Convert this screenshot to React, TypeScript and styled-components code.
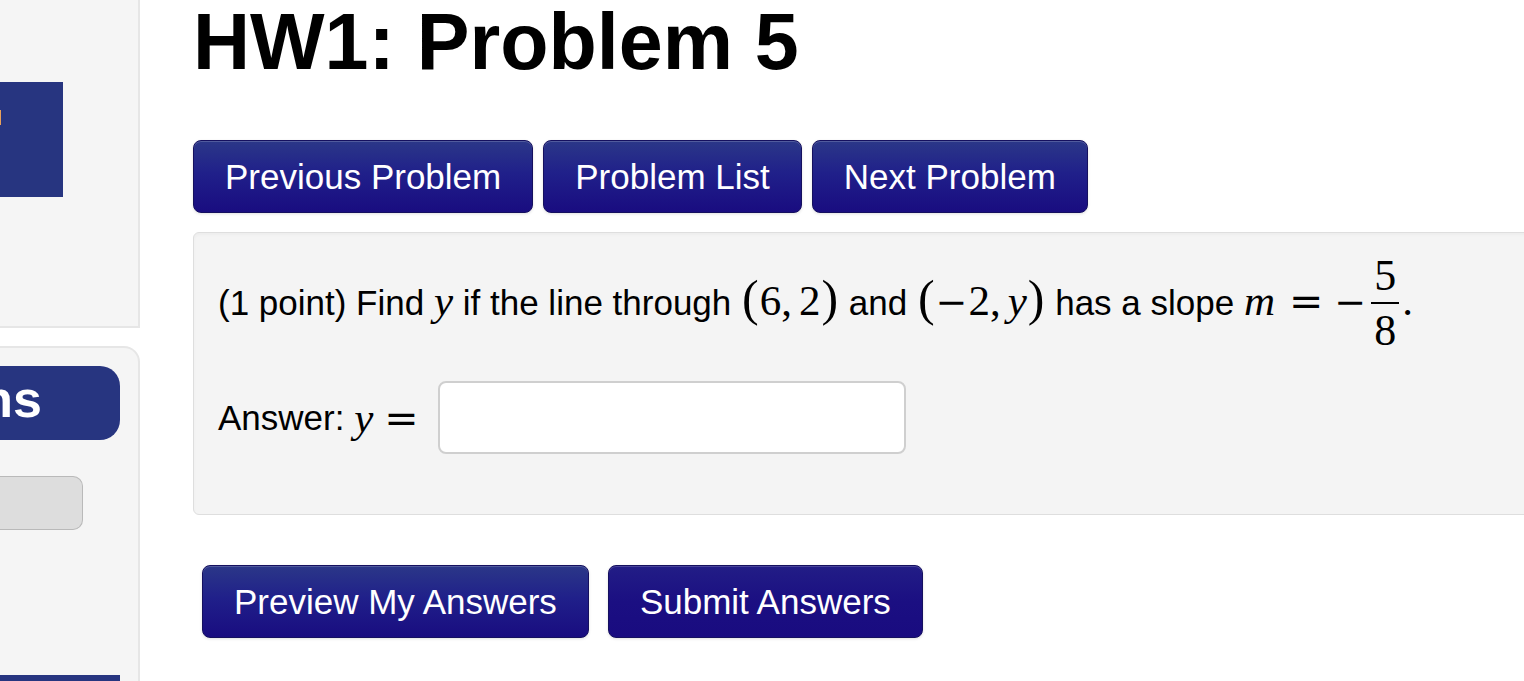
import React from "react";
import styled, { createGlobalStyle } from "styled-components";

const Global = createGlobalStyle`
  html, body { margin: 0; padding: 0; background: #ffffff; overflow: hidden; }
  body { font-family: "Liberation Sans", Arial, sans-serif; color: #000; }
  * { box-sizing: border-box; }
`;

const NAVY = "#273580";

const Page = styled.div`
  display: flex;
  height: 681px;
  overflow: hidden;
`;

const Sidebar = styled.aside`
  flex: none;
  width: 140px;
  display: flex;
  flex-direction: column;
  gap: 18px;
`;

const TopPanel = styled.div`
  height: 328px;
  flex: none;
  background: #f5f5f5;
  border-right: 2px solid #e6e6e6;
  border-bottom: 2px solid #e6e6e6;
  padding-top: 82px;
`;

const NavBlock = styled.div`
  position: relative;
  width: 63px;
  height: 115px;
  background: ${NAVY};
`;

const OrangeMark = styled.span`
  position: absolute;
  left: 0;
  top: 28px;
  width: 1px;
  height: 15px;
  background: #e9a15a;
`;

const BottomPanel = styled.div`
  flex: 1;
  background: #f5f5f5;
  border: 2px solid #e6e6e6;
  border-left: none;
  border-top-right-radius: 16px;
  padding: 18px 18px 0 0;
  display: flex;
  flex-direction: column;
`;

const SideTitle = styled.div`
  flex: none;
  height: 74px;
  background: ${NAVY};
  border-radius: 0 20px 20px 0;
  display: flex;
  align-items: center;
  justify-content: flex-end;
  overflow: hidden;
  padding: 0 78px 8px 0;
  color: #fff;
  font-weight: bold;
  font-size: 52px;
  white-space: nowrap;
`;

const GreyButton = styled.div`
  flex: none;
  width: 83px;
  height: 54px;
  margin-top: 36px;
  background: #dddddd;
  border: 1px solid #b9b9b9;
  border-left: none;
  border-radius: 0 10px 10px 0;
`;

const SideFoot = styled.div`
  flex: none;
  margin-top: 145px;
  width: 120px;
  height: 30px;
  background: ${NAVY};
`;

const Main = styled.main`
  flex: none;
  width: 1420px;
  padding-left: 53px;
`;

const Title = styled.h1`
  margin: 2px 0 0 0;
  font-size: 79px;
  line-height: 79px;
  font-weight: bold;
`;

const NavRow = styled.div`
  display: flex;
  gap: 10px;
  margin-top: 59px;
`;

const Button = styled.button<{ $primary?: boolean }>`
  height: 73px;
  padding: 0 31px;
  border: 1px solid #15105f;
  border-radius: 8px;
  font-family: "Liberation Sans", Arial, sans-serif;
  font-size: 35px;
  color: #ffffff;
  cursor: pointer;
  background: ${(p) =>
    p.$primary
      ? "linear-gradient(to bottom, #221d86 0%, #1b0f82 50%, #190b80 100%)"
      : "linear-gradient(to bottom, #2b3788 0%, #20208a 45%, #190c80 100%)"};
  box-shadow: inset 0 1px 0 rgba(255, 255, 255, 0.18), 0 1px 3px rgba(0, 0, 0, 0.12);
`;

const ProblemBox = styled.section`
  margin-top: 19px;
  background: #f4f4f4;
  border: 1px solid #dedede;
  border-radius: 6px;
  box-shadow: inset 0 2px 3px rgba(0, 0, 0, 0.03);
  padding: 26px 24px 60px 24px;
  font-size: 35px;
`;

const Statement = styled.p`
  margin: 0;
  line-height: 40px;
  white-space: nowrap;
`;

const MathFont = styled.span`
  font-family: "Liberation Serif", "DejaVu Serif", serif;
  font-size: 43px;
  font-style: normal;
`;

const MI = styled(MathFont)<{ $wide?: boolean }>`
  font-style: italic;
  letter-spacing: ${(p) => (p.$wide ? "3px" : "0")};
`;

const Paren = styled(MathFont)`
  font-size: 50px;
  margin: 0 1px;
`;

const Comma = styled(MathFont)`
  margin-right: 7px;
`;

const Op = styled.span<{ $rel?: boolean }>`
  font-family: "DejaVu Serif", "Liberation Serif", serif;
  font-size: ${(p) => (p.$rel ? "41px" : "38px")};
  margin: ${(p) => (p.$rel ? "0 11px" : "0 1px 0 0")};
`;

const Frac = styled.span`
  display: inline-flex;
  flex-direction: column;
  align-items: center;
  vertical-align: 25px;
  margin: 0 3px 0 4px;
  font-family: "Liberation Serif", "DejaVu Serif", serif;
  font-size: 44px;
`;

const FracPart = styled.span`
  line-height: 34px;
  padding: 0 3px;
`;

const FracBar = styled.span`
  align-self: stretch;
  height: 2px;
  background: #000;
  margin: 9px 0 10px;
`;

const AnswerRow = styled.div`
  display: flex;
  align-items: center;
  margin-top: 33px;
  white-space: pre;
`;

const AnswerInput = styled.input`
  width: 468px;
  height: 73px;
  margin-left: 8px;
  border: 2px solid #cfcfcf;
  border-radius: 8px;
  background: #ffffff;
  font-size: 30px;
  padding: 0 12px;
`;

const SubmitRow = styled.div`
  display: flex;
  gap: 19px;
  margin: 50px 0 0 9px;
`;

export default function App() {
  return (
    <>
      <Global />
      <Page>
        <Sidebar>
          <TopPanel>
            <NavBlock>
              <OrangeMark />
            </NavBlock>
          </TopPanel>
          <BottomPanel>
            <SideTitle>Problems</SideTitle>
            <GreyButton />
            <SideFoot />
          </BottomPanel>
        </Sidebar>
        <Main>
          <Title>HW1: Problem 5</Title>
          <NavRow>
            <Button>Previous Problem</Button>
            <Button>Problem List</Button>
            <Button>Next Problem</Button>
          </NavRow>
          <ProblemBox>
            <Statement>
              (1 point) Find <MI>y</MI> if the line through{" "}
              <Paren>(</Paren>
              <MathFont>6</MathFont>
              <Comma>,</Comma>
              <MathFont>2</MathFont>
              <Paren>)</Paren> and <Paren>(</Paren>
              <Op>−</Op>
              <MathFont>2</MathFont>
              <Comma>,</Comma>
              <MI>y</MI>
              <Paren>)</Paren> has a slope <MI $wide>m</MI>
              <Op $rel>=</Op>
              <Op>−</Op>
              <Frac>
                <FracPart>5</FracPart>
                <FracBar />
                <FracPart>8</FracPart>
              </Frac>
              <MathFont>.</MathFont>
            </Statement>
            <AnswerRow>
              Answer: <MI>y</MI>
              <Op $rel>=</Op>
              <AnswerInput type="text" aria-label="Answer" />
            </AnswerRow>
          </ProblemBox>
          <SubmitRow>
            <Button>Preview My Answers</Button>
            <Button $primary>Submit Answers</Button>
          </SubmitRow>
        </Main>
      </Page>
    </>
  );
}
